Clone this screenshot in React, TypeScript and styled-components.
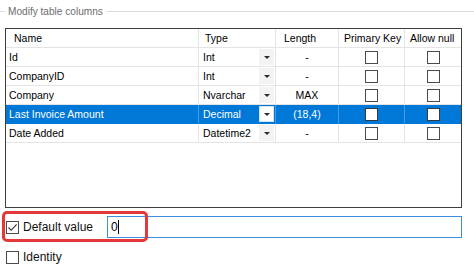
import React from 'react'
import styled, { createGlobalStyle } from 'styled-components'

const GlobalStyle = createGlobalStyle`
  body {
    margin: 0;
    background: #ffffff;
    font-family: 'Liberation Sans', Arial, sans-serif;
  }
`

const Page = styled.div`
  width: 474px;
  height: 278px;
  overflow: hidden;
  display: flex;
  flex-direction: column;
`

const GroupHeader = styled.div`
  height: 22px;
  display: flex;
  align-items: center;
  gap: 3px;

  &:before,
  &:after {
    content: '';
    height: 1px;
    background: #dcdcdc;
  }
  &:before {
    width: 5px;
  }
  &:after {
    flex: 1;
  }
`

const GroupTitle = styled.span`
  font-size: 10.1px;
  color: #6d6d6d;
`

const Grid = styled.div`
  margin: 6px 0 0 5px;
  width: 455px;
  height: 178px;
  border: 1px solid #3f3f3f;
  display: flex;
  flex-direction: column;
`

const Row = styled.div<{ selected?: boolean }>`
  display: grid;
  grid-template-columns: 193px 77px 63px 66px 56px;
  height: 19px;
  background: ${({ selected }) => (selected ? '#0078d7' : '#ffffff')};
  color: ${({ selected }) => (selected ? '#ffffff' : '#000000')};
  font-size: 10.5px;
`

const Cell = styled.div<{ align?: 'left' | 'center'; pad?: number; selected?: boolean }>`
  display: flex;
  align-items: center;
  justify-content: ${({ align }) => (align === 'center' ? 'center' : 'flex-start')};
  padding-left: ${({ pad }) => pad ?? 0}px;
  border-right: 1px solid ${({ selected }) => (selected ? '#4a9be0' : '#e4e4e4')};
  border-bottom: 1px solid ${({ selected }) => (selected ? '#0078d7' : '#e4e4e4')};
  white-space: nowrap;
  overflow: hidden;

  &:last-child {
    border-right: none;
  }
`

const TypeCell = styled(Cell)`
  justify-content: space-between;
  padding-right: 1px;
`

const DropButton = styled.div<{ selected?: boolean }>`
  width: 15px;
  height: 16px;
  box-sizing: border-box;
  display: flex;
  align-items: center;
  justify-content: center;
  background: ${({ selected }) => (selected ? '#ffffff' : '#f3f3f3')};
  border: 1px solid ${({ selected }) => (selected ? '#cfe4f7' : '#f3f3f3')};

  &:after {
    content: '';
    border-left: 3px solid transparent;
    border-right: 3px solid transparent;
    border-top: 3px solid #2b2b2b;
  }
`

const Box = styled.span<{ onBlue?: boolean }>`
  width: 13px;
  height: 13px;
  box-sizing: border-box;
  border: 1px solid ${({ onBlue }) => (onBlue ? '#3a3a3a' : '#4a4a4a')};
  background: #ffffff;
  display: inline-flex;
  align-items: center;
  justify-content: center;
  flex: 0 0 auto;
`

const Options = styled.div`
  display: flex;
  flex-direction: column;
  gap: 8px;
  margin-top: 8px;
`

const OptionRow = styled.div`
  position: relative;
  height: 22px;
  display: flex;
  align-items: center;
  padding-left: 6px;
  gap: 4px;
  font-size: 12px;
  color: #111111;
`

const Label = styled.span<{ width?: number }>`
  flex: 0 0 ${({ width }) => (width ? `${width}px` : 'auto')};
`

const TextBox = styled.div`
  width: 355px;
  height: 22px;
  box-sizing: border-box;
  border: 1px solid #3d8fdc;
  display: flex;
  align-items: center;
  padding-left: 3px;
  font-size: 12px;
  color: #000000;
`

const Caret = styled.span`
  width: 1px;
  height: 14px;
  background: #000000;
`

const Highlight = styled.div`
  position: absolute;
  left: 2px;
  top: -5px;
  width: 146px;
  height: 31px;
  box-sizing: border-box;
  border: 3px solid #e5383b;
  border-radius: 5px;
  pointer-events: none;
`

type Column = {
  name: string
  type: string
  length: string
}

const columns: Column[] = [
  { name: 'Id', type: 'Int', length: '-' },
  { name: 'CompanyID', type: 'Int', length: '-' },
  { name: 'Company', type: 'Nvarchar', length: 'MAX' },
  { name: 'Last Invoice Amount', type: 'Decimal', length: '(18,4)' },
  { name: 'Date Added', type: 'Datetime2', length: '-' },
]

const SELECTED = 3

function Check() {
  return (
    <svg width="11" height="11" viewBox="0 0 11 11">
      <path d="M1.5 5.5 L4.2 8.3 L9.6 2.3" fill="none" stroke="#2b2b2b" strokeWidth="1.1" />
    </svg>
  )
}

function App() {
  return (
    <Page>
      <GlobalStyle />
      <GroupHeader>
        <GroupTitle>Modify table columns</GroupTitle>
      </GroupHeader>

      <Grid>
        <Row>
          <Cell pad={8}>Name</Cell>
          <Cell pad={6}>Type</Cell>
          <Cell pad={8}>Length</Cell>
          <Cell pad={5}>Primary Key</Cell>
          <Cell pad={5}>Allow null</Cell>
        </Row>
        {columns.map((c, i) => {
          const sel = i === SELECTED
          return (
            <Row key={c.name} selected={sel}>
              <Cell pad={3} selected={sel}>
                {c.name}
              </Cell>
              <TypeCell pad={4} selected={sel}>
                {c.type}
                <DropButton selected={sel} />
              </TypeCell>
              <Cell align="center" selected={sel}>
                {c.length}
              </Cell>
              <Cell align="center" selected={sel}>
                <Box onBlue={sel} />
              </Cell>
              <Cell align="center" selected={sel}>
                <Box onBlue={sel} />
              </Cell>
            </Row>
          )
        })}
      </Grid>

      <Options>
        <OptionRow>
          <Box>
            <Check />
          </Box>
          <Label width={80}>Default value</Label>
          <TextBox>
            0<Caret />
          </TextBox>
          <Highlight />
        </OptionRow>
        <OptionRow>
          <Box />
          <Label>Identity</Label>
        </OptionRow>
      </Options>
    </Page>
  )
}

export default App
